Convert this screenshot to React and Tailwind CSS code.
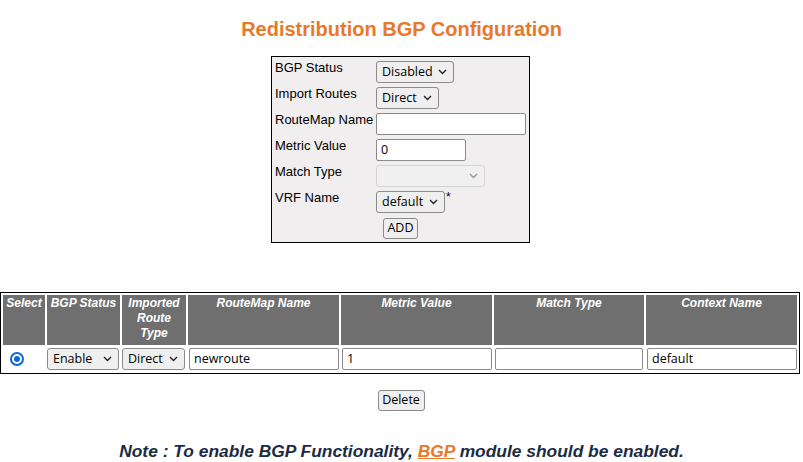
import React from 'react';

const Chevron = ({ color = '#222' }) => (
  <svg width="9" height="6" viewBox="0 0 9 6" className="shrink-0">
    <path d="M1 1l3.5 3.5L8 1" fill="none" stroke={color} strokeWidth="1.4" />
  </svg>
);

// fake native select, drawn like the Windows look in the screenshot
const Select = ({ value, width, disabled }) => (
  <div
    className={`flex items-center justify-between h-[22px] rounded-[3px] border pl-[5px] pr-[6px] text-[12.5px] ${
      disabled ? 'border-[#d4d4d4] bg-[#f0f0f0] text-[#999]' : 'border-[#8a8a8a] bg-[#efefef] text-black'
    }`}
    style={{ width, fontFamily: '"Open Sans", sans-serif' }}
  >
    <span className="leading-none">{value}</span>
    <Chevron color={disabled ? '#999' : '#222'} />
  </div>
);

const Input = ({ value = '', width }) => (
  <div
    className="flex items-center h-[22px] border border-[#8a8a8a] rounded-[2px] bg-white px-[4px] text-[12.5px] text-black"
    style={{ width, fontFamily: '"Open Sans", sans-serif' }}
  >
    {value}
  </div>
);

const Button = ({ children, className = '' }) => (
  <div
    className={`inline-flex items-center justify-center h-[21px] rounded-[3px] border border-[#8a8a8a] bg-[#efefef] text-[12.5px] text-black ${className}`}
    style={{ fontFamily: '"Open Sans", sans-serif' }}
  >
    {children}
  </div>
);

const FormRow = ({ label, children }) => (
  <div className="flex items-start h-[22px] mb-[4px]">
    <div className="w-[101px] shrink-0 whitespace-nowrap text-[13px] leading-[15px] -mt-[1px] text-black">{label}</div>
    {children}
  </div>
);

const headers = [
  { label: 'Select', w: 'w-[42px]' },
  { label: 'BGP Status', w: 'w-[73px]' },
  { label: 'Imported Route Type', w: 'w-[64px]' },
  { label: 'RouteMap Name', w: 'w-[151px]' },
  { label: 'Metric Value', w: 'w-[151px]' },
  { label: 'Match Type', w: 'w-[150px]' },
  { label: 'Context Name', w: 'w-[151px]' },
];

export default function App() {
  return (
    <div className="w-[803px] h-[462px] bg-white overflow-hidden" style={{ fontFamily: '"Liberation Sans", Arial, sans-serif' }}>
      <h1 className="pt-[17px] text-center text-[20px] leading-[24px] font-bold text-[#e8792b]">
        Redistribution BGP Configuration
      </h1>

      {/* config form */}
      <div className="mt-[15px] ml-[271px] w-[259px] border border-black bg-[#f0eeee] pt-[4px] pb-[3px] px-[3px]">
        <FormRow label="BGP Status"><Select value="Disabled" width={78} /></FormRow>
        <FormRow label="Import Routes"><Select value="Direct" width={63} /></FormRow>
        <FormRow label="RouteMap Name"><Input width={150} /></FormRow>
        <FormRow label="Metric Value"><Input value="0" width={90} /></FormRow>
        <FormRow label="Match Type"><Select value="" width={109} disabled /></FormRow>
        <FormRow label="VRF Name">
          <Select value="default" width={69} />
          <span className="text-[12px] leading-[12px] ml-[1px]">*</span>
        </FormRow>
        <div className="flex pl-[108px] pt-[1px]">
          <Button className="w-[35px]">ADD</Button>
        </div>
      </div>

      {/* redistribution table */}
      <table className="mt-[49px] w-[800px] border border-black border-separate border-spacing-[2px] table-fixed">
        <thead>
          <tr>
            {headers.map((h) => (
              <th
                key={h.label}
                className={`${h.w} h-[50px] align-top bg-[#6f6f6f] text-white text-[12px] leading-[15px] font-bold italic px-[2px] pt-[1px]`}
              >
                {h.label}
              </th>
            ))}
          </tr>
        </thead>
        <tbody>
          <tr>
            <td className="h-[24px] align-middle">
              <div className="flex pl-[7px]">
                <div className="w-[14px] h-[14px] rounded-full border-[2px] border-[#0b67d6] flex items-center justify-center">
                  <div className="w-[6px] h-[6px] rounded-full bg-[#0b67d6]" />
                </div>
              </div>
            </td>
            <td className="align-middle"><Select value="Enable" width={72} /></td>
            <td className="align-middle"><Select value="Direct" width={63} /></td>
            <td className="align-middle pl-[1px]"><Input value="newroute" width={150} /></td>
            <td className="align-middle pl-[1px]"><Input value="1" width={150} /></td>
            <td className="align-middle pl-[1px]"><Input width={148} /></td>
            <td className="align-middle pl-[1px]"><Input value="default" width={150} /></td>
          </tr>
        </tbody>
      </table>

      <div className="mt-[16px] flex justify-center">
        <Button className="w-[47px] ml-[-1px]">Delete</Button>
      </div>

      <p className="mt-[30px] text-center text-[17.4px] leading-[20px] font-bold italic text-[#1c2b45]">
        Note : To enable BGP Functionality, <span className="text-[#e8792b] underline">BGP</span> module should be enabled.
      </p>
    </div>
  );
}
